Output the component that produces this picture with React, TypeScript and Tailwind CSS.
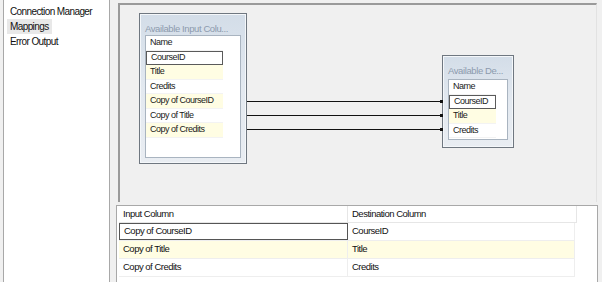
import React from "react";

const F = { fontFamily: '"Liberation Sans", Arial, sans-serif' };

function ListRow({ text, yellow, focus, w }: { text: string; yellow?: boolean; focus?: boolean; w: string }) {
  return (
    <div
      className={`h-[14.5px] ${w} flex items-center pl-[4px] text-[9px] tracking-[-0.5px] leading-none text-[#1a1a1a] whitespace-nowrap ${
        yellow ? "bg-[#fffde3]" : ""
      } ${focus ? "border border-[#5a5a5a]" : "border-b border-[#f3f3f3]"}`}
    >
      {text}
    </div>
  );
}

function ColBox({
  title,
  rows,
  className,
  listClass,
  rowW,
}: {
  title: string;
  rows: { t: string; y?: boolean; f?: boolean }[];
  className: string;
  listClass: string;
  rowW: string;
}) {
  return (
    <div
      className={`absolute border border-[#6f7780] bg-gradient-to-b from-[#d3dde8] via-[#e3e9f0] to-[#e9edf2] shadow-[inset_0_0_0_1px_#f4f7fa] ${className}`}
    >
      <div className="px-[5px] pt-[10px] text-[9.5px] tracking-[-0.4px] leading-none text-[#8c9aad] whitespace-nowrap overflow-hidden">
        {title}
      </div>
      <div className={`absolute bg-white border border-[#a9b4c0] ${listClass}`}>
        {rows.map((r, i) => (
          <ListRow key={i} text={r.t} yellow={r.y} focus={r.f} w={rowW} />
        ))}
      </div>
    </div>
  );
}

export default function App() {
  return (
    <div className="w-[602px] h-[282px] flex bg-[#f0f0f0] overflow-hidden" style={F}>
      {/* left list */}
      <div className="ml-[3px] w-[107px] h-full bg-white border-l border-r border-[#a8a8a8] pt-[4px] pl-[3px] text-[10px] tracking-[-0.6px] text-[#111] whitespace-nowrap">
        <div className="h-[15px] flex items-center px-[3px]">Connection Manager</div>
        <div className="h-[15px] flex items-center px-[3px] bg-[#e8e8e8] w-fit">Mappings</div>
        <div className="h-[15px] flex items-center px-[3px]">Error Output</div>
      </div>

      {/* right */}
      <div className="flex-1 flex flex-col pl-[8px] pr-[4px] pt-[3px]">
        {/* canvas */}
        <div className="relative h-[199px] mr-[1px] border-t-2 border-l-2 border-[#9a9a9a] border-r border-r-[#e2e2e2] bg-[#f0f0f0]">
          <ColBox
            title="Available Input Colu..."
            className="left-[19px] top-[8px] w-[108px] h-[151px]"
            listClass="left-[5px] top-[21px] w-[96px] h-[123px]"
            rowW="w-[77px]"
            rows={[
              { t: "Name" },
              { t: "CourseID", f: true },
              { t: "Title", y: true },
              { t: "Credits" },
              { t: "Copy of CourseID", y: true },
              { t: "Copy of Title" },
              { t: "Copy of Credits", y: true },
            ]}
          />
          <ColBox
            title="Available De..."
            className="left-[322px] top-[50px] w-[72px] h-[93px]"
            listClass="left-[5px] top-[23px] w-[60px] h-[61px]"
            rowW="w-[47px]"
            rows={[
              { t: "Name" },
              { t: "CourseID", f: true },
              { t: "Title", y: true },
              { t: "Credits" },
            ]}
          />
          <svg className="absolute left-[127px] top-[90px]" width="196" height="40">
            {[6, 20, 34].map((y) => (
              <g key={y}>
                <line x1="0" y1={y + 0.5} x2="196" y2={y + 0.5} stroke="#111" strokeWidth="1" />
                <rect x="193" y={y - 1} width="3" height="3" fill="#111" />
              </g>
            ))}
          </svg>
        </div>

        {/* grid */}
        <div className="mt-[3px] -ml-[2px] flex-1 bg-white border-l border-t border-r border-[#a8a8a8] pl-[2px] text-[9.5px] tracking-[-0.5px] text-[#111] whitespace-nowrap">
          <div className="flex h-[17px] border-b border-[#e6e6e6] w-[458px]">
            <div className="w-[229px] flex items-center pl-[4px] border-r border-[#e6e6e6]">Input Column</div>
            <div className="flex-1 flex items-center pl-[4px] border-r border-[#e6e6e6]">Destination Column</div>
          </div>
          <div className="flex h-[18px] border-b border-[#eeeeee] w-[456px]">
            <div className="w-[229px] flex items-center pl-[4px] border border-[#555]">Copy of CourseID</div>
            <div className="flex-1 flex items-center pl-[4px] border-r border-[#eeeeee]">CourseID</div>
          </div>
          <div className="flex h-[18px] border-b border-[#eeeeee] w-[456px] bg-[#fffde3]">
            <div className="w-[229px] flex items-center pl-[4px] border-r border-[#eeeeee]">Copy of Title</div>
            <div className="flex-1 flex items-center pl-[4px] border-r border-[#eeeeee]">Title</div>
          </div>
          <div className="flex h-[18px] border-b border-[#eeeeee] w-[456px]">
            <div className="w-[229px] flex items-center pl-[4px] border-r border-[#eeeeee]">Copy of Credits</div>
            <div className="flex-1 flex items-center pl-[4px] border-r border-[#eeeeee]">Credits</div>
          </div>
        </div>
      </div>
    </div>
  );
}
